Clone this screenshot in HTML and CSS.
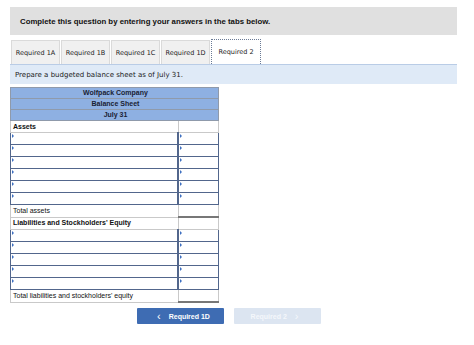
FILE: index.html
```html
<!DOCTYPE html>
<html lang="en">

<head>
  <meta charset="UTF-8">
  <title>Budgeted Balance Sheet</title>
  <link rel="stylesheet" href="styles.css">
</head>

<body>
  <div class="page">
    <div class="notice">Complete this question by entering your answers in the tabs below.</div>

    <div class="tabs">
      <div class="tab">Required 1A</div>
      <div class="tab">Required 1B</div>
      <div class="tab">Required 1C</div>
      <div class="tab">Required 1D</div>
      <div class="tab active">Required 2</div>
    </div>

    <div class="prompt">Prepare a budgeted balance sheet as of July 31.</div>

    <table class="sheet">
      <tr class="title"><td colspan="2">Wolfpack Company</td></tr>
      <tr class="title"><td colspan="2">Balance Sheet</td></tr>
      <tr class="title"><td colspan="2">July 31</td></tr>
      <tr class="plain"><td class="label bold">Assets</td><td class="amount"></td></tr>
      <tr class="entry"><td class="label"></td><td class="amount"></td></tr>
      <tr class="entry"><td class="label"></td><td class="amount"></td></tr>
      <tr class="entry"><td class="label"></td><td class="amount"></td></tr>
      <tr class="entry"><td class="label"></td><td class="amount"></td></tr>
      <tr class="entry"><td class="label"></td><td class="amount"></td></tr>
      <tr class="entry"><td class="label"></td><td class="amount"></td></tr>
      <tr class="plain total"><td class="label">Total assets</td><td class="amount"></td></tr>
      <tr class="plain"><td class="label bold">Liabilities and Stockholders' Equity</td><td class="amount"></td></tr>
      <tr class="entry"><td class="label"></td><td class="amount"></td></tr>
      <tr class="entry"><td class="label"></td><td class="amount"></td></tr>
      <tr class="entry"><td class="label"></td><td class="amount"></td></tr>
      <tr class="entry"><td class="label"></td><td class="amount"></td></tr>
      <tr class="entry"><td class="label"></td><td class="amount"></td></tr>
      <tr class="plain total grand"><td class="label">Total liabilities and stockholders' equity</td><td class="amount"></td></tr>
    </table>

    <div class="nav">
      <button class="nav-btn prev"><span class="chev">&lsaquo;</span> Required 1D</button>
      <button class="nav-btn next">Required 2 <span class="chev">&rsaquo;</span></button>
    </div>
  </div>
</body>

</html>
```

FILE: styles.css
```css
body {
  margin: 0;
  padding: 0;
  background: #fff;
  font-family: "Liberation Sans", Arial, sans-serif;
  color: #111;
}

.page {
  width: 447px;
  padding: 7px 0 0 10px;
}

.notice {
  background-color: #e0e0e0;
  height: 28px;
  padding-left: 10px;
  display: flex;
  align-items: center;
  font-size: 7.8px;
  font-weight: bold;
  color: #111;
}

.tabs {
  display: flex;
  align-items: flex-end;
  margin-top: 4px;
  padding-left: 1px;
  height: 25px;
}

.tab {
  width: 49px;
  height: 24px;
  box-sizing: border-box;
  display: flex;
  align-items: center;
  justify-content: center;
  background: #f0f0f0;
  border: 1px solid #dadada;
  border-bottom: none;
  margin-right: 1px;
  font-family: "DejaVu Sans", Verdana, sans-serif;
  font-size: 6.5px;
  color: #222;
}

.tab.active {
  width: 50px;
  height: 25px;
  background: #fff;
  border: 1px dotted #6a7a95;
  border-bottom: none;
}

.prompt {
  background-color: #dfeaf7;
  border-top: 1px solid #b9cce6;
  height: 19px;
  padding-left: 5px;
  display: flex;
  align-items: center;
  font-family: "DejaVu Sans", Verdana, sans-serif;
  font-size: 7px;
  color: #222;
}

.sheet {
  margin-top: 3px;
  width: 209px;
  border-collapse: collapse;
  font-size: 7px;
}

.sheet td {
  padding: 0 0 0 2px;
  height: 11px;
  line-height: 10px;
}

.title td {
  height: 10px;
  background-color: #8eb0e2;
  border: 1px solid #8f9aab;
  text-align: center;
  font-weight: bold;
  color: #1a2233;
}

.plain td {
  border: 1px solid #c9c9c9;
  background: #fff;
}

.entry td {
  border: 1px solid #52668c;
  position: relative;
  background: #fff;
}

.entry .amount {
  border-left-width: 2px;
}

.entry td::before {
  content: "";
  position: absolute;
  left: 1px;
  top: 1px;
  border-top: 2px solid transparent;
  border-bottom: 2px solid transparent;
  border-left: 2px solid #3d6fc0;
}

.label {
  width: 164px;
}

.bold {
  font-weight: bold;
}

.total .amount {
  border-bottom: 2px solid #777;
}

.nav {
  display: flex;
  gap: 10px;
  margin: 5px 0 0 127px;
}

.nav-btn {
  width: 87px;
  height: 16px;
  border: none;
  border-radius: 1px;
  font-family: "Liberation Sans", Arial, sans-serif;
  font-size: 7px;
  font-weight: bold;
  color: #fff;
  padding: 0;
}

.prev {
  background-color: #3e6cb3;
}

.next {
  background-color: #dce5f1;
  color: #f4f7fb;
}

.chev {
  font-size: 11px;
  font-weight: normal;
  margin: 0 6px;
  vertical-align: -1px;
}
```
